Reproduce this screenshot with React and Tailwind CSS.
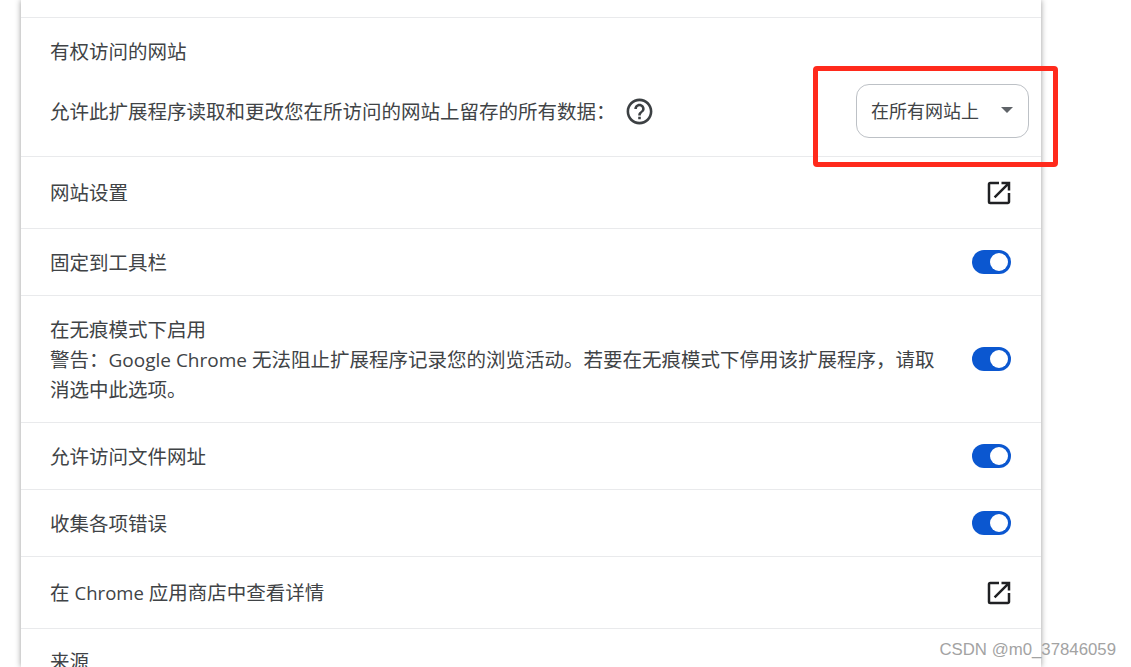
import React from 'react';

const font = '"Open Sans", "Noto Sans CJK SC", sans-serif';

function ExternalIcon() {
    return (
        <svg width="30" height="30" viewBox="0 0 24 24" className="text-[#202124] shrink-0 mr-[-3px]" fill="currentColor">
            <path d="M19 19H5V5h7V3H5a2 2 0 0 0-2 2v14a2 2 0 0 0 2 2h14c1.1 0 2-.9 2-2v-7h-2v7zM14 3v2h3.59l-9.83 9.83 1.41 1.41L19 6.41V10h2V3h-7z" />
        </svg>
    );
}

function Toggle() {
    return (
        <div className="w-[39px] h-[24px] rounded-full bg-[#0b57d0] flex items-center justify-end pr-[3px] shrink-0">
            <div className="w-[18px] h-[18px] rounded-full bg-white" />
        </div>
    );
}

function Row({ height, children, right, textClass = 'pt-[2px]' }) {
    return (
        <div className={`flex items-center justify-between pl-[29px] pr-[30px] border-b border-[#e9eaec] ${height}`}>
            <div className={`text-[#404346] ${textClass}`}>{children}</div>
            {right}
        </div>
    );
}

export default function App() {
    return (
        <div className="relative h-[667px] w-[1131px] overflow-hidden bg-white text-[19.5px]" style={{ fontFamily: font }}>
            <div className="ml-[21px] w-[1020px] h-full bg-white shadow-[0_0_6px_rgba(0,0,0,0.4)]">
                <div className="h-[18px] border-b border-[#e9eaec]" />
                <div className="h-[139px] border-b border-[#e9eaec] pl-[29px] pr-[12px] text-[#404346]">
                    <div className="pt-[19px] leading-[30px]">有权访问的网站</div>
                    <div className="mt-[17px] flex items-center justify-between">
                        <div className="flex items-center">
                            <span className="pt-[1px]">允许此扩展程序读取和更改您在所访问的网站上留存的所有数据：</span>
                            <svg width="31" height="31" viewBox="0 0 24 24" className="ml-[8px] text-[#3c4043]" fill="currentColor">
                                <path d="M11 18h2v-2h-2v2zm1-16C6.48 2 2 6.48 2 12s4.48 10 10 10 10-4.48 10-10S17.52 2 12 2zm0 18c-4.41 0-8-3.59-8-8s3.59-8 8-8 8 3.59 8 8-3.59 8-8 8zm0-14c-2.21 0-4 1.79-4 4h2c0-1.1.9-2 2-2s2 .9 2 2c0 2-3 1.75-3 5h2c0-2.25 3-2.5 3-5 0-2.21-1.79-4-4-4z" />
                            </svg>
                        </div>
                        <div className="w-[173px] h-[54px] rounded-[13px] border border-[#bdc1c6] flex items-center justify-between pl-[14px] pr-[15px] text-[18px] text-[#404346]">
                            <span className="pt-[1px]">在所有网站上</span>
                            <span className="w-0 h-0 border-x-[6px] border-x-transparent border-t-[6px] border-t-[#5f6368] mb-[2px]" />
                        </div>
                    </div>
                </div>
                <Row height="h-[72px]" textClass="pt-[1px]" right={<ExternalIcon />}>网站设置</Row>
                <Row height="h-[67px]" right={<Toggle />}>固定到工具栏</Row>
                <Row height="h-[127px]" right={<Toggle />}>
                    <div className="w-[890px] leading-[30px]">
                        <div>在无痕模式下启用</div>
                        <div>警告：<span className="text-[19px]">Google Chrome</span> 无法阻止扩展程序记录您的浏览活动。若要在无痕模式下停用该扩展程序，请取消选中此选项。</div>
                    </div>
                </Row>
                <Row height="h-[67px]" right={<Toggle />}>允许访问文件网址</Row>
                <Row height="h-[67px]" right={<Toggle />}>收集各项错误</Row>
                <Row height="h-[72px]" textClass="pt-[1px]" right={<ExternalIcon />}>在 <span className="text-[18.5px]">Chrome</span> 应用商店中查看详情</Row>
                <div className="pl-[29px] pt-[18px] leading-[30px] text-[#404346]">来源</div>
            </div>
            {/* red marker drawn over the screenshot */}
            <div className="absolute left-[813px] top-[66px] w-[245px] h-[101px] rounded-[4px] border-[5px] border-[#ff2a1c]" />
            <div className="absolute right-[15px] top-[640px] text-[16.8px] leading-[20px] text-[#a3a3a3]" style={{ fontFamily: '"Liberation Sans", sans-serif' }}>CSDN @m0_37846059</div>
        </div>
    );
}
